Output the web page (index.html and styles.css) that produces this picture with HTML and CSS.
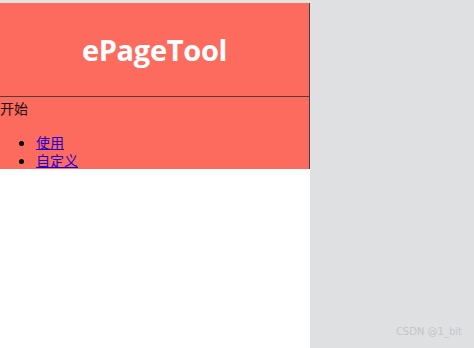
FILE: index.html
```html
<!DOCTYPE html>
<html lang="zh">
	<head>
		<meta charset="UTF-8">
		<title>ePageTool</title>
		<link rel="stylesheet" href="styles.css">
	</head>
	<body>
		<div class="page">
			<div class="main">
				<div class="panel">
					<div class="header">
						<h1>ePageTool</h1>
					</div>
					<div class="menu">开始</div>
					<ul class="links">
						<li><a href="#">使用</a></li>
						<li><a href="#">自定义</a></li>
					</ul>
				</div>
			</div>
			<div class="side"></div>
		</div>
		<div class="mark">CSDN @1_bit</div>
	</body>
</html>
```

FILE: styles.css
```css
body {
	margin: 0;
	font-family: "Noto Sans CJK SC", "Noto Sans", sans-serif;
	font-size: 14px;
	line-height: 18px;
	background-color: white;
}
.page {
	display: flex;
	height: 348px;
}
.main {
	width: 310px;
	border-top: 3px solid #e4e2df;
}
.panel {
	background-color: #fd6b5f;
	border-right: 1px solid #4a3a38;
}
.header {
	height: 93px;
	display: flex;
	align-items: center;
	justify-content: center;
	border-bottom: 1px solid #5a3b37;
}
.header h1 {
	margin: 0;
	font-family: "Open Sans", sans-serif;
	font-size: 29px;
	font-weight: 700;
	color: white;
	letter-spacing: -0.3px;
}
.menu {
	padding-top: 2px;
	color: #1a0a08;
}
.links {
	margin: 16px 0 0 0;
	padding: 0 0 0 36px;
}
.links li {
	height: 18px;
}
.links a {
	color: #2200cc;
}
.side {
	flex: 1;
	background-color: #dfe0e2;
}
.mark {
	position: absolute;
	right: 12px;
	bottom: 7px;
	font-family: "DejaVu Sans", sans-serif;
	font-size: 10px;
	color: #c4c5c7;
}
```
